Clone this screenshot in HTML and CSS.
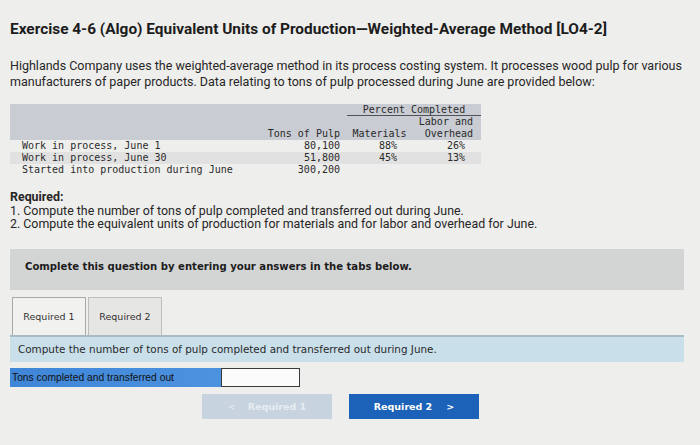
FILE: index.html
```html
<!DOCTYPE html>
<html>
<head>
<meta charset="utf-8">
<link rel="stylesheet" href="styles.css">
</head>
<body>
<div class="page">
  <h1 class="title">Exercise 4-6 (Algo) Equivalent Units of Production—Weighted-Average Method [LO4-2]</h1>
  <p class="intro">Highlands Company uses the weighted-average method in its process costing system. It processes wood pulp for various manufacturers of paper products. Data relating to tons of pulp processed during June are provided below:</p>

  <div class="data">
    <div class="head">
      <div class="hrow">
        <span class="c-label"></span><span class="c-tons"></span><span class="c-pct">Percent Completed</span>
      </div>
      <div class="hrow">
        <span class="c-label"></span><span class="c-tons"></span><span class="c-mat"></span><span class="c-lab">Labor and</span>
      </div>
      <div class="hrow">
        <span class="c-label"></span><span class="c-tons">Tons of Pulp</span><span class="c-mat hmat">Materials</span><span class="c-lab">Overhead</span>
      </div>
    </div>
    <div class="drow">
      <span class="c-label">Work in process, June 1</span><span class="c-tons">80,100</span><span class="c-mat">88%</span><span class="c-lab v">26%</span>
    </div>
    <div class="drow alt">
      <span class="c-label">Work in process, June 30</span><span class="c-tons">51,800</span><span class="c-mat">45%</span><span class="c-lab v">13%</span>
    </div>
    <div class="drow">
      <span class="c-label">Started into production during June</span><span class="c-tons">300,200</span><span class="c-mat"></span><span class="c-lab v"></span>
    </div>
  </div>

  <div class="required">
    <div class="req-title">Required:</div>
    <div>1. Compute the number of tons of pulp completed and transferred out during June.</div>
    <div>2. Compute the equivalent units of production for materials and for labor and overhead for June.</div>
  </div>

  <div class="notice">Complete this question by entering your answers in the tabs below.</div>

  <div class="tabs">
    <div class="tab active">Required 1</div>
    <div class="tab">Required 2</div>
  </div>
  <div class="instruction">Compute the number of tons of pulp completed and transferred out during June.</div>

  <div class="answer">
    <div class="answer-label">Tons completed and transferred out</div>
    <div class="answer-input"></div>
  </div>

  <div class="nav">
    <div class="btn prev"><span class="chev">&lt;</span>Required 1</div>
    <div class="btn next">Required 2<span class="chev">&gt;</span></div>
  </div>
</div>
</body>
</html>
```
FILE: styles.css
```css
html, body {
  margin: 0;
  padding: 0;
  background: #eeeeec;
}
.page {
  width: 700px;
  height: 445px;
  overflow: hidden;
  color: #1f1f1f;
}
.title {
  margin: 0;
  padding: 19px 0 0 10px;
  font-family: Roboto, "Liberation Sans", sans-serif;
  font-weight: 700;
  font-size: 15.4px;
  line-height: 20px;
  color: #1c1c1c;
  white-space: nowrap;
}
.intro {
  margin: 19px 0 0 10px;
  width: 684px;
  font-family: Roboto, "Liberation Sans", sans-serif;
  font-size: 12.5px;
  line-height: 16px;
  color: #262626;
}
.data {
  margin: 14px 0 0 10px;
  width: 471px;
  font-family: "DejaVu Sans Mono", monospace;
  font-size: 10px;
  line-height: 12px;
  color: #2a2a2a;
}
.head {
  background: #c9ccd2;
}
.hrow, .drow {
  display: grid;
  grid-template-columns: 228px 90px 73px 68px;
  height: 12px;
  padding-left: 12px;
}
.drow.alt {
  background: #e1e1e1;
}
.c-label { white-space: nowrap; }
.c-tons { text-align: right; white-space: nowrap; }
.c-pct {
  grid-column: 3 / span 2;
  text-align: center;
  border-bottom: 1px solid #4f5358;
  height: 11px;
  line-height: 11px;
  margin-left: 7px;
}
.c-mat { text-align: right; padding-right: 16px; }
.hmat { text-align: center; padding-right: 0; padding-left: 6px; }
.c-lab { text-align: right; padding-right: 8px; }
.c-lab.v { padding-right: 16px; }

.required {
  margin: 14px 0 0 10px;
  font-family: Roboto, "Liberation Sans", sans-serif;
  font-size: 12.4px;
  line-height: 13.5px;
  color: #262626;
}
.req-title { font-weight: 700; }

.notice {
  margin: 18px 0 0 10px;
  width: 674px;
  height: 41px;
  box-sizing: border-box;
  padding: 12px 0 0 15px;
  background: #d3d4d4;
  font-family: "DejaVu Sans", sans-serif;
  font-weight: 700;
  font-size: 10.1px;
  line-height: 12px;
  color: #1c1c1c;
}
.tabs {
  display: flex;
  gap: 2px;
  margin: 7px 0 0 12px;
}
.tab {
  width: 74px;
  height: 38px;
  box-sizing: border-box;
  border: 1px solid #bdbdbd;
  border-bottom: none;
  background: #e6e6e5;
  font-family: "DejaVu Sans", sans-serif;
  font-size: 9.5px;
  line-height: 38px;
  text-align: center;
  color: #333;
}
.tab.active {
  background: #f1f1f0;
  border-color: #a9a9a9;
}
.instruction {
  margin: 0 0 0 10px;
  width: 674px;
  height: 27px;
  box-sizing: border-box;
  border-top: 2px solid #a9bcc6;
  background: #c9dfea;
  padding-left: 8px;
  font-family: "DejaVu Sans", sans-serif;
  font-size: 10.4px;
  line-height: 25px;
  color: #2a2a2a;
}
.answer {
  display: flex;
  margin: 6px 0 0 10px;
  height: 19px;
}
.answer-label {
  width: 211px;
  background: linear-gradient(90deg, #3f86d8, #4c92df);
  font-family: "Liberation Sans", sans-serif;
  font-size: 10.3px;
  line-height: 19px;
  padding-left: 2px;
  box-sizing: border-box;
  color: #111;
}
.answer-input {
  width: 79px;
  box-sizing: border-box;
  border: 1.5px solid #3a3a3a;
  background: #fbfbfb;
}
.nav {
  display: flex;
  gap: 17px;
  margin: 7px 0 0 202px;
}
.btn {
  width: 130px;
  height: 25px;
  box-sizing: border-box;
  display: flex;
  align-items: center;
  justify-content: center;
  font-family: "DejaVu Sans", sans-serif;
  font-weight: 700;
  font-size: 9.5px;
  color: #fff;
}
.btn.prev {
  background: #c7d3de;
  color: #e6ecf2;
}
.btn.prev .chev { margin-right: 12px; font-weight: 400; }
.btn.next {
  background: #1b62b8;
}
.btn.next .chev { margin-left: 14px; }
```
